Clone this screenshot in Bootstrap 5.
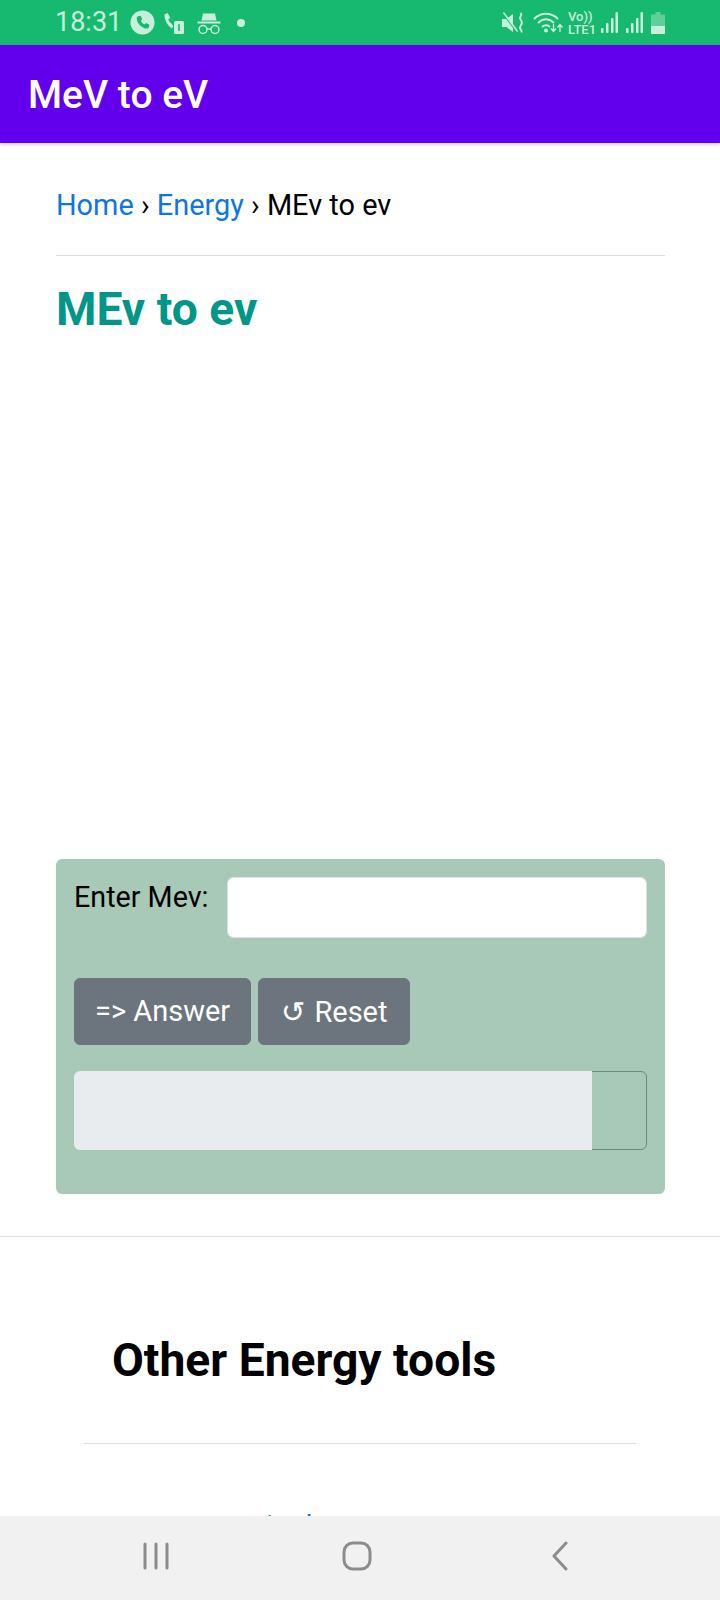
<!DOCTYPE html>
<html lang="en">
<head>
  <meta charset="UTF-8" />
  <meta name="viewport" content="width=device-width, initial-scale=1.0" />
  <title>MeV to eV</title>
  <link href="https://cdn.jsdelivr.net/npm/bootstrap@5.3.0/dist/css/bootstrap.min.css" rel="stylesheet">
  <style>
    body { height: 1600px; font-family: Roboto, "Liberation Sans", sans-serif; color: #000; }
    a { text-decoration: none; color: #0f75e0; }
    .status-row { height: 45px; background: #16b96f; color: #c8efdb; padding: 0 55px 0 55px; flex-shrink: 0; }
    .status-time { font-size: 27px; font-weight: 400; line-height: 1; margin-right: 8px; }
    .volte { font-size: 13px; line-height: 13px; font-weight: 500; width: 27px; margin: 0 6px 0 5px; white-space: nowrap; }
    .volte span { display: block; }
    .app-row { height: 98px; background: #6200ee; color: #fff; padding: 3px 0 0 28px; font-size: 39px; font-weight: 500; flex-shrink: 0; box-shadow: 0 2px 3px rgba(98,0,238,.2); }
    .page-body { flex: 1 1 0; min-height: 0; overflow: hidden; }
    .page-inner { padding: 41px 55px 0 56px; }
    .crumbs { font-size: 28.9px; line-height: 42px; }
    .soft-rule { margin: 0; border: 0; border-top: 1px solid #dedede; opacity: 1; }
    .crumb-rule { margin-top: 29px; }
    .tool-title { font-size: 46.2px; line-height: 54px; font-weight: 700; color: #009688; margin: 26px 0 0; }
    .ad-gap { height: 523px; }
    .tool-box { background: #a8c9b7; border-radius: 6px; padding: 18px 18px 44px; }
    .tool-label { font-size: 28.7px; line-height: 40px; margin: 0 18px 0 0; white-space: nowrap; }
    .tool-input { height: 61px; border-radius: 6px; }
    .tool-btns { margin-top: 40px; gap: 7px; }
    .tool-btn { font-size: 29px; height: 67px; padding: 0 20px; border-radius: 6px; }
    .tool-btn-wide { padding: 0 22px; }
    .reset-mark { font-family: "Noto Sans CJK JP", "DejaVu Sans", sans-serif; font-weight: 300; margin-right: 2px; }
    .result-group { margin-top: 26px; height: 79px; }
    .result-field { background: #e9ecef; border-radius: 6px 0 0 6px; border: 0; }
    .result-end { width: 56px; background: transparent; border: 1px solid #6b8a80; border-radius: 0 6px 6px 0; }
    .full-rule { margin-top: 42px; }
    .others { padding: 0 84px; }
    .others-title { font-size: 46.2px; line-height: 54px; font-weight: 700; margin: 96px 0 0 28px; }
    .others-rule { margin-top: 56px; }
    .others-link { display: block; margin: 61px 0 0 28px; font-size: 28.9px; line-height: 42px; }
    .nav-row { height: 84px; background: #f1f1f1; flex-shrink: 0; padding: 0 6px 4px 0; }
    .nav-slot { width: 201px; }
  </style>
</head>
<body class="d-flex flex-column overflow-hidden">
  <div class="status-row d-flex align-items-center">
    <span class="status-time">18:31</span>
    <svg width="25" height="25" viewBox="0 0 26 26" class="me-2"><circle cx="13" cy="13" r="12.5" fill="#c8efdb"/><path d="M8.5 6.5l2.5-.5 1.8 3.6-1.5 1.6c.8 1.7 2 3 3.8 3.900l1.600-1.500 3.500 1.800-.6 2.500c-.3 1-1.400 1.600-2.500 1.400C11.500 18.200 7.600 14.200 7 9c-.1-1.100.5-2.200 1.500-2.500z" fill="#16b96f"/></svg>
    <svg width="22" height="22" viewBox="0 0 22 22" class="me-2"><path d="M1.500 2.500L4.500 1l2.800 4.800-2 1.700c.6 1.800 1.800 3.200 3.300 4.200l1.700 2.500-1.300 2.300C4.500 13.500 1.500 8.500 1.500 2.500z" fill="#c8efdb"/><rect x="11" y="9" width="10" height="13" rx="1.500" fill="#c8efdb"/><path d="M15.200 12.500l1.600-.8V19h-1.600z" fill="#16b96f"/></svg>
    <svg width="24" height="24" viewBox="0 0 24 24" class="ms-1 me-3"><path d="M6 2.500h12l1.500 7h-15z" fill="#c8efdb"/><rect x="0.500" y="10.500" width="23" height="2" fill="#c8efdb"/><circle cx="6" cy="18.500" r="4" fill="none" stroke="#c8efdb" stroke-width="1.500"/><circle cx="18" cy="18.500" r="4" fill="none" stroke="#c8efdb" stroke-width="1.500"/><path d="M10 18h4" stroke="#c8efdb" stroke-width="1.500"/></svg>
    <svg width="8" height="8" viewBox="0 0 8 8"><circle cx="4" cy="4" r="4" fill="#c8efdb"/></svg>
    <div class="ms-auto d-flex align-items-center">
      <svg width="23" height="22" viewBox="0 0 23 22" class="me-2"><path d="M0 7h4.500L11 2v18l-6.500-5H0z" fill="#c8efdb"/><path d="M1 1l14 19" stroke="#16b96f" stroke-width="2"/><path d="M1.500 0.500l14 19" stroke="#c8efdb" stroke-width="1.600"/><path d="M18.500 1c2.500 2.500-2 4 0 6.500s2 4 0 6.500 2 4 1 6.500" fill="none" stroke="#c8efdb" stroke-width="2"/></svg>
      <svg width="30" height="22" viewBox="0 0 30 22"><path d="M1 7c7-7 17-7 24 0M5 11c5-5 11-5 16 0M9 15c3-2.500 5-2.500 8 0" fill="none" stroke="#c8efdb" stroke-width="2"/><circle cx="13" cy="18.500" r="2" fill="#c8efdb"/><path d="M20.500 12v7m-2.500-2.500l2.500 3 2.500-3M27 20v-7m-2.500 2.500l2.500-3 2.500 3" fill="none" stroke="#c8efdb" stroke-width="1.300"/></svg>
      <div class="volte"><span>Vo))</span><span>LTE1</span></div>
      <svg width="17" height="21" viewBox="0 0 17 21" class="me-2"><g fill="#c8efdb"><rect x="0" y="16" width="2.500" height="5" rx="1"/><rect x="5" y="11" width="2.500" height="10" rx="1"/><rect x="10" y="6" width="2.500" height="15" rx="1"/><rect x="14.500" y="0" width="2.500" height="21" rx="1"/></g></svg>
      <svg width="17" height="21" viewBox="0 0 17 21" class="me-2"><g fill="#c8efdb"><rect x="0" y="16" width="2.500" height="5" rx="1"/><rect x="5" y="11" width="2.500" height="10" rx="1"/><rect x="10" y="6" width="2.500" height="15" rx="1"/><rect x="14.500" y="0" width="2.500" height="21" rx="1"/></g></svg>
      <svg width="14" height="22" viewBox="0 0 14 22"><path d="M4.500 0h5v2.500H14V22H0V2.500h4.500z" fill="#c8efdb" fill-opacity=".4"/><path d="M0 14h14v7a1 1 0 0 1-1 1H1a1 1 0 0 1-1-1z" fill="#c8efdb"/></svg>
    </div>
  </div>

  <div class="app-row d-flex align-items-center">MeV to eV</div>

  <div class="page-body">
    <div class="page-inner">
      <div class="crumbs"><a href="#">Home</a> › <a href="#">Energy</a> › MEv to ev</div>
      <hr class="soft-rule crumb-rule">
      <h1 class="tool-title">MEv to ev</h1>
      <div class="ad-gap"></div>
      <div class="tool-box">
        <div class="d-flex align-items-start">
          <label class="tool-label" for="mevInput">Enter Mev:</label>
          <input id="mevInput" type="text" class="form-control tool-input">
        </div>
        <div class="tool-btns d-flex">
          <button class="btn btn-secondary tool-btn">=&gt; Answer</button>
          <button class="btn btn-secondary tool-btn tool-btn-wide"><span class="reset-mark">↺</span> Reset</button>
        </div>
        <div class="result-group input-group">
          <input type="text" class="form-control result-field" readonly>
          <span class="result-end"></span>
        </div>
      </div>
    </div>
    <hr class="soft-rule full-rule">
    <div class="others">
      <h2 class="others-title">Other Energy tools</h2>
      <hr class="soft-rule others-rule">
      <a class="others-link" href="#">ton to megajoule</a>
    </div>
  </div>

  <div class="nav-row d-flex justify-content-center align-items-center">
    <div class="nav-slot d-flex justify-content-center">
      <svg width="26" height="28" viewBox="0 0 26 28"><path d="M2 2v24M13 2v24M24 2v24" stroke="#8c8c8c" stroke-width="3" stroke-linecap="round"/></svg>
    </div>
    <div class="nav-slot d-flex justify-content-center">
      <svg width="30" height="30" viewBox="0 0 30 30"><rect x="2" y="2" width="26" height="26" rx="9" fill="none" stroke="#8c8c8c" stroke-width="3"/></svg>
    </div>
    <div class="nav-slot d-flex justify-content-center ps-1">
      <svg width="18" height="30" viewBox="0 0 18 30"><path d="M15 2L3 15l12 13" fill="none" stroke="#8c8c8c" stroke-width="3" stroke-linecap="round" stroke-linejoin="round"/></svg>
    </div>
  </div>

  <script src="https://cdn.jsdelivr.net/npm/bootstrap@5.3.0/dist/js/bootstrap.bundle.min.js"></script>
</body>
</html>
